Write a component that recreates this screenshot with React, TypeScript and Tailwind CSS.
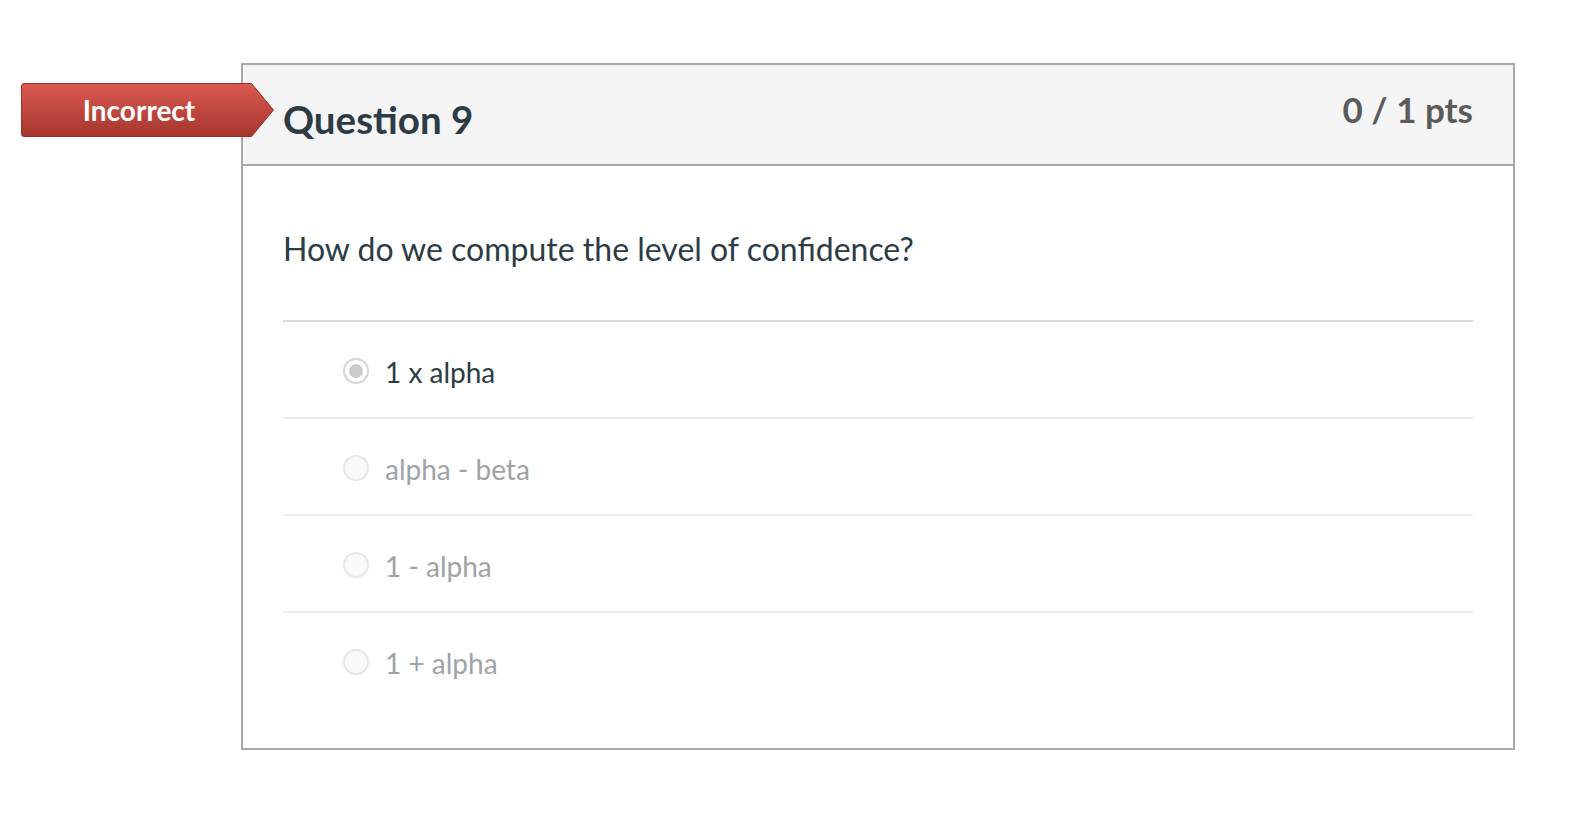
import React from "react";

const answers = [
  { text: "1 x alpha", selected: true },
  { text: "alpha - beta", selected: false },
  { text: "1 - alpha", selected: false },
  { text: "1 + alpha", selected: false },
];

function Radio({ selected }: { selected: boolean }) {
  if (selected) {
    return (
      <span className="flex h-[26px] w-[26px] shrink-0 items-center justify-center rounded-full border-2 border-[#d6d6d6] bg-white">
        <span className="h-[14px] w-[14px] rounded-full bg-[#cccccc]" />
      </span>
    );
  }
  return <span className="h-[26px] w-[26px] shrink-0 rounded-full border-2 border-[#e6e6e6] bg-[#fafafa]" />;
}

export default function App() {
  return (
    <div className="relative min-h-[817px] w-[1592px] bg-white font-['Lato',sans-serif]">
      <div className="pl-[241px] pt-[63px]">
        <div className="w-[1274px] border-2 border-[#a9a9a9]">
          <div className="flex h-[101px] items-start justify-between border-b-2 border-[#a9a9a9] bg-[#f5f5f5] px-[40px]">
            <div className="pt-[35px] text-[38.5px] font-bold leading-[38px] text-[#2d3b45]">Question 9</div>
            <div className="pt-[27px] text-[35px] font-bold leading-[35px] text-[#5b5b5b]">0 / 1 pts</div>
          </div>
          <div className="px-[40px] pb-[40px]">
            <div className="pt-[67px] pb-[55px] text-[32px] leading-[32px] text-[#2d3b45]">
              How do we compute the level of confidence?
            </div>
            {answers.map((a, i) => (
              <div
                key={a.text}
                className={`flex h-[97px] items-center border-t-2 pl-[60px] pt-[2px] ${i === 0 ? "border-[#dcdcdc]" : "border-[#ececec]"}`}
              >
                <Radio selected={a.selected} />
                <span
                  className={`ml-[16px] pt-[2px] text-[28px] leading-[28px] ${a.selected ? "text-[#2d3b45]" : "text-[#9ea3a8]"}`}
                >
                  {a.text}
                </span>
              </div>
            ))}
          </div>
        </div>
      </div>

      <div className="absolute left-[21px] top-[83px] h-[54px] w-[253px]">
        <svg className="absolute inset-0" width="253" height="54" viewBox="0 0 253 54">
          <defs>
            <linearGradient id="badgeGrad" x1="0" y1="0" x2="0" y2="1">
              <stop offset="0" stopColor="#da5a51" />
              <stop offset="1" stopColor="#a5362d" />
            </linearGradient>
          </defs>
          <path d="M3 0.5 H230.5 L252.5 27 L230.5 53.5 H3 A2.5 2.5 0 0 1 0.5 51 V3 A2.5 2.5 0 0 1 3 0.5 Z" fill="url(#badgeGrad)" stroke="#9a3029" strokeWidth="1" />
        </svg>
        <div className="relative flex h-full w-[236px] items-center justify-center text-[28px] font-bold leading-[28px] text-white">
          Incorrect
        </div>
      </div>
    </div>
  );
}
